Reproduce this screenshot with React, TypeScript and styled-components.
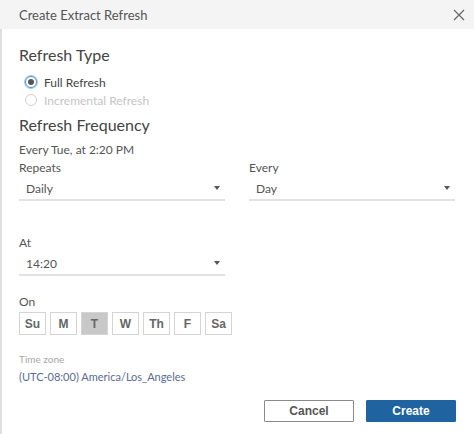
import React from "react";
import styled, { createGlobalStyle } from "styled-components";

const GlobalStyle = createGlobalStyle`
  html, body {
    margin: 0;
    padding: 0;
    background: #ffffff;
  }
  body {
    font-family: Lato, "Noto Sans", sans-serif;
    color: #555;
  }
`;

const Dialog = styled.div`
  width: 474px;
  height: 434px;
  background: #fff;
  display: flex;
  flex-direction: column;
  box-sizing: border-box;
`;

const Header = styled.div`
  height: 29px;
  flex-shrink: 0;
  background: #f4f4f4;
  display: flex;
  align-items: center;
  justify-content: space-between;
  padding: 0 8px 0 19px;
  font-size: 13px;
  color: #555;
`;

const CloseButton = styled.button`
  border: none;
  background: none;
  padding: 0;
  width: 14px;
  height: 14px;
  display: flex;
  align-items: center;
  justify-content: center;
  cursor: pointer;
`;

const Main = styled.div`
  flex: 1;
  display: flex;
  flex-direction: column;
  border-left: 2px solid #dedede;
`;

const Body = styled.div`
  flex: 1;
  padding: 0 19px 0 17px;
  display: flex;
  flex-direction: column;
`;

const SectionTitle = styled.div<{ $top: number }>`
  font-size: 16px;
  line-height: 20px;
  color: #444;
  margin-top: ${(p) => p.$top}px;
`;

const RadioGroup = styled.div`
  margin-top: 8px;
  padding-left: 6px;
  display: flex;
  flex-direction: column;
`;

const RadioRow = styled.label<{ $disabled?: boolean }>`
  display: flex;
  align-items: center;
  gap: 7px;
  height: 18px;
  font-size: 12px;
  color: ${(p) => (p.$disabled ? "#c4c4c4" : "#444")};
`;

const RadioCircle = styled.span<{ $checked?: boolean; $disabled?: boolean }>`
  width: 12px;
  height: 12px;
  border-radius: 50%;
  box-sizing: border-box;
  border: 1px solid
    ${(p) => (p.$disabled ? "#d0d0d0" : p.$checked ? "#4e8fd0" : "#999")};
  box-shadow: ${(p) => (p.$checked ? "0 0 0 1px #a9c9ea" : "none")};
  display: flex;
  align-items: center;
  justify-content: center;

  &::after {
    content: "";
    width: 6px;
    height: 6px;
    border-radius: 50%;
    background: ${(p) => (p.$checked ? "#555" : "transparent")};
  }
`;

const Summary = styled.div`
  margin-top: 7px;
  font-size: 12px;
  line-height: 16px;
  color: #555;
`;

const Label = styled.div<{ $top?: number }>`
  font-size: 12px;
  line-height: 16px;
  color: #555;
  margin-top: ${(p) => p.$top ?? 0}px;
`;

const FieldGrid = styled.div`
  margin-top: 2px;
  display: grid;
  grid-template-columns: 206px 206px;
  column-gap: 24px;
`;

const Field = styled.div`
  display: flex;
  flex-direction: column;
  width: 206px;
`;

const Select = styled.div`
  margin-top: 1px;
  height: 24px;
  box-sizing: border-box;
  border-bottom: 2px solid #e2e2e2;
  padding: 0 5px 0 7px;
  display: flex;
  align-items: center;
  justify-content: space-between;
  font-size: 12px;
  color: #555;
`;

const Caret = styled.span`
  width: 0;
  height: 0;
  border-left: 3.5px solid transparent;
  border-right: 3.5px solid transparent;
  border-top: 4px solid #555;
`;

const DayRow = styled.div`
  margin-top: 2px;
  display: flex;
  gap: 4px;
`;

const DayButton = styled.button<{ $active?: boolean }>`
  width: 27px;
  height: 23px;
  box-sizing: border-box;
  border: 1px solid #d4d4d4;
  background: ${(p) => (p.$active ? "#c8c8c8" : "#fff")};
  font-family: "Liberation Sans", Arial, sans-serif;
  font-size: 12px;
  font-weight: bold;
  color: #666;
  padding: 0;
  cursor: pointer;
`;

const ZoneLabel = styled.div`
  margin-top: 17px;
  font-size: 10px;
  line-height: 14px;
  color: #a8a8a8;
`;

const ZoneValue = styled.div`
  margin-top: 3px;
  font-size: 11px;
  line-height: 16px;
  color: #5a6b94;
`;

const Footer = styled.div`
  display: flex;
  justify-content: flex-end;
  gap: 12px;
  padding: 0 18px 12px 0;
`;

const ActionButton = styled.button<{ $primary?: boolean }>`
  width: 90px;
  height: 22px;
  box-sizing: border-box;
  border: 1px solid ${(p) => (p.$primary ? "#1f64a0" : "#8a8a8a")};
  border-radius: 1px;
  background: ${(p) => (p.$primary ? "#1f64a0" : "#fff")};
  color: ${(p) => (p.$primary ? "#fff" : "#555")};
  font-family: "Liberation Sans", Arial, sans-serif;
  font-size: 12px;
  font-weight: bold;
  padding: 0;
  cursor: pointer;
`;

const days = ["Su", "M", "T", "W", "Th", "F", "Sa"];

export default function App() {
  return (
    <>
      <GlobalStyle />
      <Dialog>
        <Header>
          <span>Create Extract Refresh</span>
          <CloseButton aria-label="Close">
            <svg width="12" height="12" viewBox="0 0 12 12">
              <path d="M1 1 L11 11 M11 1 L1 11" stroke="#666" strokeWidth="1.2" />
            </svg>
          </CloseButton>
        </Header>
        <Main>
          <Body>
            <SectionTitle $top={16}>Refresh Type</SectionTitle>
            <RadioGroup>
              <RadioRow>
                <RadioCircle $checked />
                Full Refresh
              </RadioRow>
              <RadioRow $disabled>
                <RadioCircle $disabled />
                Incremental Refresh
              </RadioRow>
            </RadioGroup>
            <SectionTitle $top={6}>Refresh Frequency</SectionTitle>
            <Summary>Every Tue, at 2:20 PM</Summary>
            <FieldGrid>
              <Field>
                <Label>Repeats</Label>
                <Select>
                  Daily
                  <Caret />
                </Select>
              </Field>
              <Field>
                <Label>Every</Label>
                <Select>
                  Day
                  <Caret />
                </Select>
              </Field>
            </FieldGrid>
            <Label $top={34}>At</Label>
            <Field>
              <Select>
                14:20
                <Caret />
              </Select>
            </Field>
            <Label $top={18}>On</Label>
            <DayRow>
              {days.map((d) => (
                <DayButton key={d} $active={d === "T"}>
                  {d}
                </DayButton>
              ))}
            </DayRow>
            <ZoneLabel>Time zone</ZoneLabel>
            <ZoneValue>(UTC-08:00) America/Los_Angeles</ZoneValue>
          </Body>
          <Footer>
            <ActionButton>Cancel</ActionButton>
            <ActionButton $primary>Create</ActionButton>
          </Footer>
        </Main>
      </Dialog>
    </>
  );
}
